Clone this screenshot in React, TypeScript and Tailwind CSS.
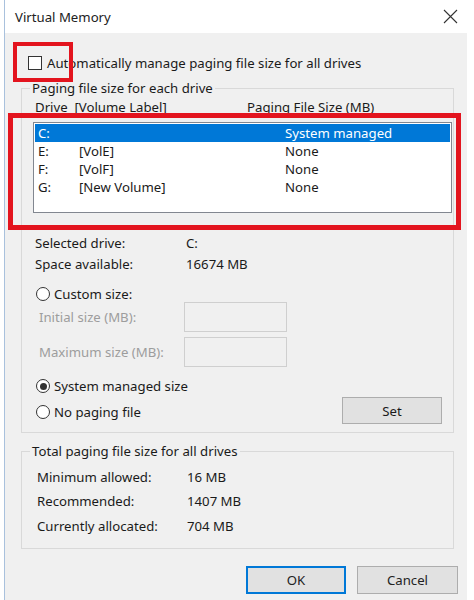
import React from "react";

const font = { fontFamily: '"Noto Sans", "Open Sans", sans-serif' };

function Radio({ checked }: { checked?: boolean }) {
  return (
    <span className="flex h-[14px] w-[14px] shrink-0 items-center justify-center rounded-full border border-[#333333] bg-white">
      {checked && <span className="h-[7px] w-[7px] rounded-full bg-[#333333]" />}
    </span>
  );
}

function Btn({ children, primary, w }: { children: React.ReactNode; primary?: boolean; w: string }) {
  return (
    <div
      className={`flex h-[28px] ${w} items-center justify-center bg-[#e1e1e1] text-[#222] ${
        primary ? "border-2 border-[#0078d7]" : "border border-[#adadad]"
      }`}
    >
      {children}
    </div>
  );
}

export default function App() {
  return (
    <div className="relative flex h-[600px] w-[474px] bg-white text-[13.2px] leading-[18px] text-[#1a1a1a]" style={font}>
      <div className="w-[4px] shrink-0 bg-white" />
      <div className="w-[1px] shrink-0 bg-[#a9c1dd]" />
      <div className="flex w-[462px] shrink-0 flex-col">
        {/* Title bar */}
        <div className="flex h-[33px] shrink-0 items-center justify-between bg-white pl-[10px] pr-[9px]">
          <span className="text-[13.2px] text-[#222]">Virtual Memory</span>
          <svg width="15" height="15" viewBox="0 0 15 15">
            <path d="M1 1 L14 14 M14 1 L1 14" stroke="#333" strokeWidth="1.1" fill="none" />
          </svg>
        </div>
        {/* Body */}
        <div className="flex flex-1 flex-col bg-[#f0f0f0]">
          <div className="ml-[23px] mt-[20px] flex h-[20px] items-center gap-[5px]">
            <span className="h-[14px] w-[14px] shrink-0 border border-[#333333] bg-white" />
            <span>Automatically manage paging file size for all drives</span>
          </div>

          <fieldset className="ml-[16px] mt-[6px] w-[433px] border border-[#d9d9d9] pb-[8px]">
            <legend className="ml-[8px] px-[2px] leading-[18px]">Paging file size for each drive</legend>
            <div className="mt-[1px] flex h-[18px] items-center pl-[13px]">
              <span className="w-[212px]">Drive&nbsp; [Volume Label]</span>
              <span>Paging File Size (MB)</span>
            </div>
            <div className="ml-[11px] mt-[6px] h-[91px] w-[419px] border border-[#828790] bg-white p-[1px]">
              <div className="flex h-[18px] items-center bg-[#0078d7] text-white">
                <span className="w-[44px] pl-[3px]">C:</span>
                <span className="w-[206px]"></span>
                <span>System managed</span>
              </div>
              {[
                ["E:", "[VolE]", "None"],
                ["F:", "[VolF]", "None"],
                ["G:", "[New Volume]", "None"],
              ].map(([d, l, s]) => (
                <div key={d} className="flex h-[18px] items-center">
                  <span className="w-[44px] pl-[3px]">{d}</span>
                  <span className="w-[206px]">{l}</span>
                  <span>{s}</span>
                </div>
              ))}
            </div>

            <div className="mt-[21px] flex h-[18px] items-center pl-[13px]">
              <span className="w-[151px]">Selected drive:</span>
              <span>C:</span>
            </div>
            <div className="mt-[3px] flex h-[18px] items-center pl-[13px]">
              <span className="w-[151px]">Space available:</span>
              <span>16674 MB</span>
            </div>

            <div className="mt-[12px] flex h-[17px] items-center gap-[4px] pl-[14px]">
              <Radio />
              <span>Custom size:</span>
            </div>
            <div className="flex h-[30px] items-center pl-[17px] text-[#9d9d9d]">
              <span className="w-[145px]">Initial size (MB):</span>
              <div className="h-[30px] w-[103px] border border-[#cfcfcf] bg-[#f0f0f0]" />
            </div>
            <div className="mt-[5px] flex h-[30px] items-center pl-[17px] text-[#9d9d9d]">
              <span className="w-[145px]">Maximum size (MB):</span>
              <div className="h-[30px] w-[103px] border border-[#cfcfcf] bg-[#f0f0f0]" />
            </div>

            <div className="mt-[10px] flex h-[18px] items-center gap-[4px] pl-[14px]">
              <Radio checked />
              <span>System managed size</span>
            </div>
            <div className="mt-[2px] flex h-[27px] items-center justify-between pl-[14px] pr-[11px]">
              <div className="mt-[3px] flex items-center gap-[4px]">
                <Radio />
                <span>No paging file</span>
              </div>
              <div className="flex h-[27px] w-[100px] items-center justify-center border border-[#adadad] bg-[#e1e1e1]">
                Set
              </div>
            </div>
          </fieldset>

          <fieldset className="ml-[16px] mt-[9px] w-[433px] border border-[#d9d9d9] pb-[13px]">
            <legend className="ml-[8px] px-[2px] leading-[18px]">Total paging file size for all drives</legend>
            <div className="mt-[8px] flex h-[18px] items-center pl-[15px]">
              <span className="w-[150px]">Minimum allowed:</span>
              <span>16 MB</span>
            </div>
            <div className="mt-[6px] flex h-[18px] items-center pl-[15px]">
              <span className="w-[150px]">Recommended:</span>
              <span>1407 MB</span>
            </div>
            <div className="mt-[7px] flex h-[18px] items-center pl-[15px]">
              <span className="w-[150px]">Currently allocated:</span>
              <span>704 MB</span>
            </div>
          </fieldset>

          <div className="mr-[9px] mt-[17px] flex justify-end gap-[11px]">
            <Btn primary w="w-[100px]">OK</Btn>
            <Btn w="w-[101px]">Cancel</Btn>
          </div>
        </div>
      </div>

      {/* Red annotation boxes */}
      <div className="pointer-events-none absolute left-[13px] top-[42px] h-[40px] w-[60px] border-[4px] border-[#e3141e]" />
      <div className="pointer-events-none absolute left-[8px] top-[113px] h-[117px] w-[453px] border-[5px] border-[#e3141e]" />
    </div>
  );
}
